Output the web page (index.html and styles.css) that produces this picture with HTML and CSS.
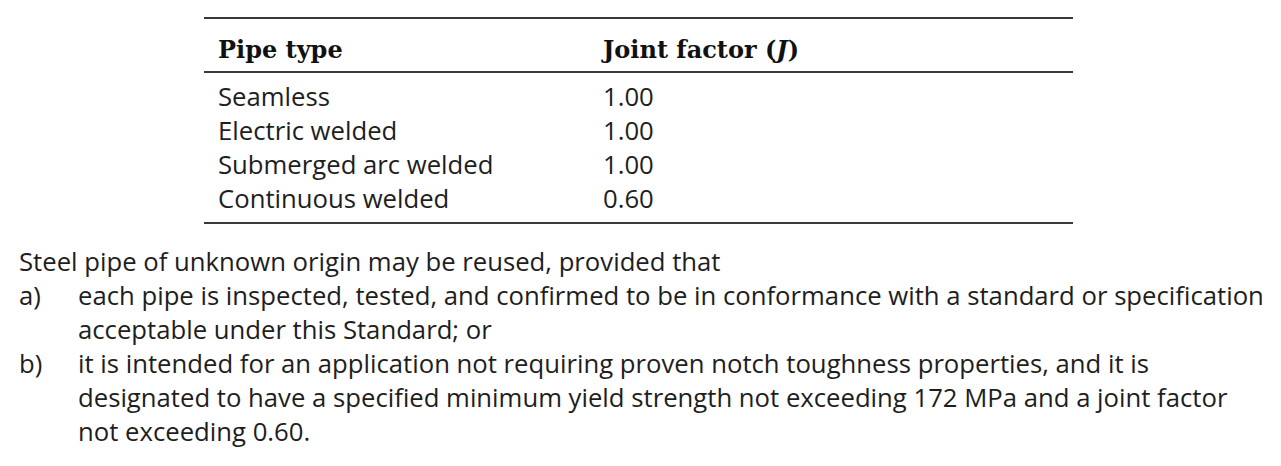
FILE: index.html
```html
<!DOCTYPE html>
<html>
<head>
<meta charset="utf-8">
<link rel="stylesheet" href="styles.css">
</head>
<body>
<div class="page">
  <div class="factor-table">
    <div class="row head">
      <div class="cell">Pipe type</div>
      <div class="cell">Joint factor (<i>J</i>)</div>
    </div>
    <div class="body">
      <div class="row"><div class="cell">Seamless</div><div class="cell">1.00</div></div>
      <div class="row"><div class="cell">Electric welded</div><div class="cell">1.00</div></div>
      <div class="row"><div class="cell">Submerged arc welded</div><div class="cell">1.00</div></div>
      <div class="row"><div class="cell">Continuous welded</div><div class="cell">0.60</div></div>
    </div>
  </div>
  <div class="text">
    <p class="lead">Steel pipe of unknown origin may be reused, provided that</p>
    <ol class="items">
      <li class="item-a"><span class="label">a)</span><span class="content">each pipe is inspected, tested, and confirmed to be in conformance with a standard or specification<br>acceptable under this Standard; or</span></li>
      <li class="item-b"><span class="label">b)</span><span class="content">it is intended for an application not requiring proven notch toughness properties, and it is<br>designated to have a specified minimum yield strength not exceeding 172 MPa and a joint factor<br>not exceeding 0.60.</span></li>
    </ol>
  </div>
</div>
</body>
</html>
```

FILE: styles.css
```css
html, body {
  margin: 0;
  padding: 0;
  background: #ffffff;
}
body {
  color: #1e1e1e;
  font-family: "Open Sans", "Noto Sans", sans-serif;
  font-size: 25.7px;
}
.page {
  padding-top: 17px;
}
.factor-table {
  margin-left: 204px;
  width: 869px;
  border-top: 2px solid #3a3a3a;
  border-bottom: 2px solid #3a3a3a;
}
.row {
  display: grid;
  grid-template-columns: 385px 1fr;
}
.cell {
  padding-left: 14px;
  white-space: nowrap;
}
.row.head {
  border-bottom: 2px solid #3a3a3a;
  font-family: "DejaVu Serif", "Liberation Serif", serif;
  font-weight: bold;
  font-size: 24px;
  line-height: 30px;
  padding-top: 16px;
  padding-bottom: 6px;
  color: #111;
}
.body {
  padding: 7px 0 6px;
}
.body .row {
  line-height: 34px;
}
.text {
  margin-top: 21px;
}
.lead {
  margin: 0 0 0 19px;
  line-height: 34px;
}
.items {
  list-style: none;
  margin: 0;
  padding: 0;
  line-height: 34px;
}
.items li {
  display: flex;
}
.label {
  width: 59px;
  flex: none;
  padding-left: 19px;
  box-sizing: content-box;
}
.content {
  flex: 1;
  white-space: nowrap;
}
```
